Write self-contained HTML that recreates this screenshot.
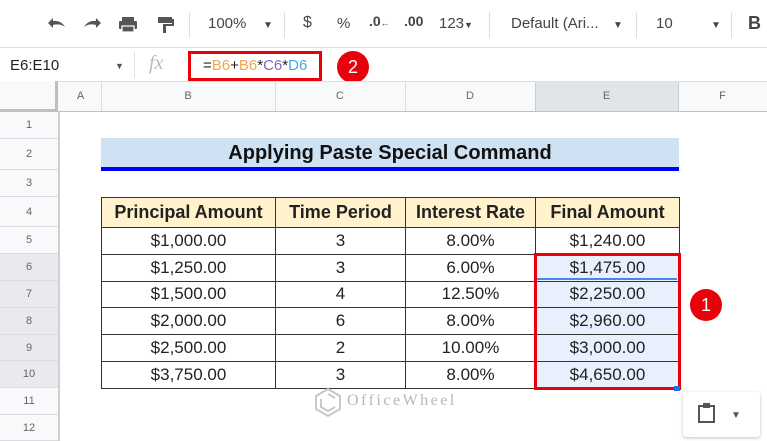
<!DOCTYPE html>
<html><head><meta charset="utf-8"><style>
*{margin:0;padding:0;box-sizing:border-box}
body{width:767px;height:441px;overflow:hidden;background:#fff;font-family:"Liberation Sans",Arial,sans-serif;position:relative}
.a{position:absolute}
.tb{color:#444;font-size:14px}
.hdr{background:#f8f9fa;color:#666;font-size:11px;text-align:center}
.rh{position:absolute;left:0;width:58px;background:#f8f9fa;border-bottom:1px solid #dadce0;color:#666;font-size:11px;display:flex;align-items:center;justify-content:center}
.rh.s{background:#e8eaed}
table{position:absolute;left:101px;top:197px;border-collapse:collapse;font-size:17px;color:#222}
td{border:1.5px solid #333;text-align:center;height:26.8px;padding:0}
tr.h td{background:#fff2cc;font-weight:bold;height:30px;font-size:18px}
td.e{background:#e8f0fe}
.circ{position:absolute;width:32px;height:32px;border-radius:50%;background:#e8000b;color:#fff;font-size:18px;display:flex;align-items:center;justify-content:center}
</style></head><body>
<div class="a" style="left:0;top:0;width:767px;height:48px;border-bottom:1px solid #e0e0e0"></div>
<svg class="a" style="top:14px;left:44px" width="140" height="20" viewBox="0 0 140 20">
<path d="M4 9 L9 4 L9 7 Q17 6 21 13 Q16 9 9 11 L9 14 Z" fill="#555"/>
<path d="M57 9 L52 4 L52 7 Q44 6 40 13 Q45 9 52 11 L52 14 Z" fill="#555"/>
<rect x="78" y="3" width="12" height="4" fill="#555"/><rect x="75" y="7" width="18" height="8" rx="1" fill="#555"/><rect x="78" y="12" width="12" height="6" fill="#555" stroke="#fff" stroke-width="1.2"/>
<rect x="114" y="3" width="14" height="6" fill="#555"/><rect x="128" y="5" width="2" height="6" fill="#555"/><rect x="119" y="10" width="11" height="2" fill="#555"/><rect x="119" y="10" width="3" height="9" fill="#555"/>
</svg>
<div class="a" style="left:189px;top:12px;width:1px;height:26px;background:#ddd"></div>
<div class="a tb" style="left:208px;top:15px;font-size:15px">100%</div>
<div class="a tb" style="left:263px;top:20px;font-size:10px">▼</div>
<div class="a" style="left:284px;top:12px;width:1px;height:26px;background:#ddd"></div>
<div class="a tb" style="left:303px;top:14px;font-size:16px">$</div>
<div class="a tb" style="left:337px;top:15px;font-size:15px">%</div>
<div class="a tb" style="left:369px;top:13px;font-weight:bold">.0<span style="font-size:9px">←</span></div>
<div class="a tb" style="left:404px;top:13px;font-weight:bold">.00</div>
<div class="a tb" style="left:439px;top:15px;font-size:15px">123<span style="font-size:9px">▼</span></div>
<div class="a" style="left:489px;top:12px;width:1px;height:26px;background:#ddd"></div>
<div class="a tb" style="left:511px;top:15px;font-size:15px">Default (Ari...</div>
<div class="a tb" style="left:613px;top:20px;font-size:10px">▼</div>
<div class="a" style="left:636px;top:12px;width:1px;height:26px;background:#ddd"></div>
<div class="a tb" style="left:656px;top:15px;font-size:15px">10</div>
<div class="a tb" style="left:711px;top:20px;font-size:10px">▼</div>
<div class="a" style="left:731px;top:12px;width:1px;height:26px;background:#ddd"></div>
<div class="a tb" style="left:748px;top:13px;font-size:18px;font-weight:bold">B</div>
<div class="a" style="left:10px;top:57px;font-size:15px;color:#222">E6:E10</div>
<div class="a" style="left:115px;top:61px;font-size:9px;color:#555">▼</div>
<div class="a" style="left:134px;top:52px;width:1px;height:26px;background:#e0e0e0"></div>
<div class="a" style="left:149px;top:52px;font-size:20px;color:#bbb;font-family:'Liberation Serif',serif;font-style:italic">fx</div>
<div class="a" style="left:188px;top:51px;width:134px;height:30px;border:3px solid #e8000b"></div>
<div class="a" style="left:203px;top:57px;font-size:15px;color:#222">=<span style="color:#f4a64b">B6</span>+<span style="color:#f4a64b">B6</span>*<span style="color:#8a63b8">C6</span>*<span style="color:#4aa7e6">D6</span></div>
<div class="circ" style="left:337px;top:51px">2</div>
<div class="a hdr" style="left:0;top:81px;width:767px;height:31px;border-top:1px solid #e0e0e0;border-bottom:1px solid #c0c0c0"></div>
<div class="a" style="left:0;top:81px;width:58px;height:31px;background:#f8f9fa;border-right:3px solid #bfbfbf;border-bottom:3px solid #bfbfbf"></div>
<div class="a" style="left:535px;top:82px;width:143px;height:29px;background:#e1e4e8"></div>
<div class="a hdr" style="left:60px;top:90px;width:41px;background:none">A</div>
<div class="a hdr" style="left:101px;top:90px;width:174px;background:none">B</div>
<div class="a hdr" style="left:275px;top:90px;width:130px;background:none">C</div>
<div class="a hdr" style="left:405px;top:90px;width:130px;background:none">D</div>
<div class="a hdr" style="left:535px;top:90px;width:143px;background:none">E</div>
<div class="a hdr" style="left:678px;top:90px;width:89px;background:none">F</div>
<div class="a" style="left:101px;top:82px;width:1px;height:29px;background:#ddd"></div>
<div class="a" style="left:275px;top:82px;width:1px;height:29px;background:#ddd"></div>
<div class="a" style="left:405px;top:82px;width:1px;height:29px;background:#ddd"></div>
<div class="a" style="left:535px;top:82px;width:1px;height:29px;background:#ccc"></div>
<div class="a" style="left:678px;top:82px;width:1px;height:29px;background:#ccc"></div>
<div class="a" style="left:58px;top:112px;width:2px;height:329px;background:#d0d0d0"></div>
<div class="rh" style="top:112px;height:27px">1</div>
<div class="rh" style="top:139px;height:31px">2</div>
<div class="rh" style="top:170px;height:27px">3</div>
<div class="rh" style="top:197px;height:30px">4</div>
<div class="rh" style="top:227px;height:27px">5</div>
<div class="rh s" style="top:254px;height:27px">6</div>
<div class="rh s" style="top:281px;height:27px">7</div>
<div class="rh s" style="top:308px;height:27px">8</div>
<div class="rh s" style="top:335px;height:26px">9</div>
<div class="rh s" style="top:361px;height:27px">10</div>
<div class="rh" style="top:388px;height:27px">11</div>
<div class="rh" style="top:415px;height:26px">12</div>
<div class="a" style="left:101px;top:138px;width:578px;height:33px;background:#cfe2f3;border-bottom:4px solid #0000ff;text-align:center;font-weight:bold;font-size:20px;line-height:31px;color:#111">Applying Paste Special Command</div>
<table>
<colgroup><col style="width:174px"><col style="width:130px"><col style="width:130px"><col style="width:144px"></colgroup>
<tr class="h"><td>Principal Amount</td><td>Time Period</td><td>Interest Rate</td><td>Final Amount</td></tr>
<tr><td>$1,000.00</td><td>3</td><td>8.00%</td><td>$1,240.00</td></tr>
<tr><td>$1,250.00</td><td>3</td><td>6.00%</td><td class="e">$1,475.00</td></tr>
<tr><td>$1,500.00</td><td>4</td><td>12.50%</td><td class="e">$2,250.00</td></tr>
<tr><td>$2,000.00</td><td>6</td><td>8.00%</td><td class="e">$2,960.00</td></tr>
<tr><td>$2,500.00</td><td>2</td><td>10.00%</td><td class="e">$3,000.00</td></tr>
<tr><td>$3,750.00</td><td>3</td><td>8.00%</td><td class="e">$4,650.00</td></tr>
</table>
<div class="a" style="left:537px;top:278px;width:140px;height:2px;background:#4a86e8"></div>
<div class="a" style="left:534px;top:253px;width:147px;height:137px;border:3px solid #e8000b"></div>
<div class="a" style="left:674px;top:386px;width:6px;height:5px;background:#1a73e8"></div>
<div class="circ" style="left:690px;top:289px">1</div>
<svg class="a" style="left:313px;top:387px" width="30" height="30" viewBox="0 0 30 30"><path d="M15 2 L27 9 L27 22 L15 29 L3 22 L3 9 Z M15 7 L22 11 M8 12 L8 20 L15 24 L22 20" fill="none" stroke="#c8c8cc" stroke-width="2"/></svg>
<div class="a" style="left:347px;top:392px;font-family:'Liberation Serif',serif;font-size:16px;letter-spacing:2.5px;color:#b8b8bc">OfficeWheel</div>
<div class="a" style="left:683px;top:392px;width:77px;height:45px;background:#fff;border-radius:3px;box-shadow:0 1px 3px rgba(0,0,0,.25)"></div>
<svg class="a" style="left:697px;top:402px" width="20" height="22" viewBox="0 0 20 22"><rect x="2" y="4" width="15" height="16" fill="none" stroke="#555" stroke-width="2"/><rect x="6" y="1" width="7" height="5" fill="#555"/></svg>
<div class="a" style="left:731px;top:410px;font-size:10px;color:#555">▼</div>
</body></html>
